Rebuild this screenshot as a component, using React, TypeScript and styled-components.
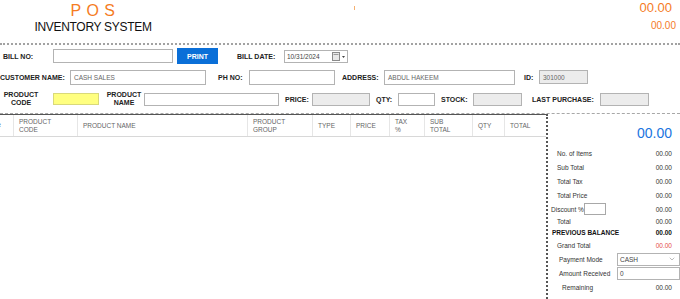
import React from "react";
import styled, { createGlobalStyle } from "styled-components";
import { ChevronDown } from "lucide-react";

const GlobalStyle = createGlobalStyle`
  body {
    margin: 0;
    font-family: "Liberation Sans", Arial, sans-serif;
    background: #fff;
    color: #222;
  }
`;

const columns = [
  { key: "no", title: "#", w: 14 },
  { key: "code", title: ["PRODUCT", "CODE"], w: 64 },
  { key: "name", title: "PRODUCT NAME", w: 170 },
  { key: "group", title: ["PRODUCT", "GROUP"], w: 65 },
  { key: "type", title: "TYPE", w: 38 },
  { key: "price", title: "PRICE", w: 39 },
  { key: "tax", title: ["TAX", "%"], w: 35 },
  { key: "sub", title: ["SUB", "TOTAL"], w: 48 },
  { key: "qty", title: "QTY", w: 32 },
  { key: "total", title: "TOTAL", w: 41 },
];

export default function App() {
  return (
    <Page>
      <GlobalStyle />
      <Header>
        <Brand>
          <BrandTop>P O S</BrandTop>
          <BrandSub>INVENTORY SYSTEM</BrandSub>
        </Brand>
        <Tick />
        <HeaderTotals>
          <BigOrange>00.00</BigOrange>
          <SmallOrange>00.00</SmallOrange>
        </HeaderTotals>
      </Header>

      <Form>
        <FormRow $h={18}>
          <Label $w={50} $ml={3}>BILL NO:</Label>
          <Input $w={120} $h={14} />
          <PrintButton>PRINT</PrintButton>
          <Label $w={47} $ml={19}>BILL DATE:</Label>
          <DateBox>
            <span>10/31/2024</span>
            <CalendarIcon width="14" height="9" viewBox="0 0 14 9">
              <rect x="0.5" y="0.5" width="7" height="8" fill="#e8e8e8" stroke="#8a8a8a" />
              <rect x="1.5" y="2" width="5" height="1" fill="#9a9a9a" />
              <path d="M10 4 L13 4 L11.5 6 Z" fill="#444" />
            </CalendarIcon>
          </DateBox>
        </FormRow>

        <FormRow $h={18}>
          <Label $w={70}>CUSTOMER NAME:</Label>
          <Input $w={136} $h={15}>CASH SALES</Input>
          <Label $w={31} $ml={12}>PH NO:</Label>
          <Input $w={86} $h={15} />
          <Label $w={42} $ml={7}>ADDRESS:</Label>
          <Input $w={131} $h={15}>ABDUL HAKEEM</Input>
          <Label $w={15} $ml={9}>ID:</Label>
          <Input $w={49} $h={14} $muted>301000</Input>
        </FormRow>

        <FormRow $h={20}>
          <StackLabel $w={42}>
            PRODUCT
            <br />
            CODE
          </StackLabel>
          <Input $w={46} $h={12} $ml={11} $yellow />
          <StackLabel $w={40} $ml={5}>
            PRODUCT
            <br />
            NAME
          </StackLabel>
          <Input $w={135} $h={13} />
          <Label $w={27} $ml={6}>PRICE:</Label>
          <Input $w={58} $h={13} $muted />
          <Label $w={22} $ml={6}>QTY:</Label>
          <Input $w={37} $h={13} />
          <Label $w={32} $ml={6}>STOCK:</Label>
          <Input $w={49} $h={13} $muted />
          <Label $w={68} $ml={10}>LAST PURCHASE:</Label>
          <Input $w={49} $h={13} $muted />
        </FormRow>
      </Form>

      <Main>
        <TableArea>
          <TableHead>
            {columns.map((c) => (
              <HeadCell key={c.key} $w={c.w} $first={c.key === "no"}>
                {Array.isArray(c.title) ? (
                  <>
                    {c.title[0]}
                    <br />
                    {c.title[1]}
                  </>
                ) : (
                  c.title
                )}
              </HeadCell>
            ))}
          </TableHead>
        </TableArea>

        <Summary>
          <BigBlue>00.00</BigBlue>
          <SumRow $h={14} $indent={9}>
            <span>No. of Items</span>
            <Value>00.00</Value>
          </SumRow>
          <SumRow $h={14} $indent={9}>
            <span>Sub Total</span>
            <Value>00.00</Value>
          </SumRow>
          <SumRow $h={14} $indent={9}>
            <span>Total Tax</span>
            <Value>00.00</Value>
          </SumRow>
          <SumRow $h={14} $indent={9}>
            <span>Total Price</span>
            <Value>00.00</Value>
          </SumRow>
          <SumRow $h={14} $indent={3}>
            <DiscountWrap>
              <span>Discount %</span>
              <SmallInput />
            </DiscountWrap>
            <Value>00.00</Value>
          </SumRow>
          <SumRow $h={10} $indent={9}>
            <span>Total</span>
            <Value>00.00</Value>
          </SumRow>
          <SumRow $h={13} $indent={4} $bold>
            <span>PREVIOUS BALANCE</span>
            <Value>00.00</Value>
          </SumRow>
          <SumRow $h={13} $indent={9}>
            <span>Grand Total</span>
            <Value $red>00.00</Value>
          </SumRow>
          <SumRow $h={14} $indent={11} $flush>
            <span>Payment Mode</span>
            <Control>
              <span>CASH</span>
              <ChevronDown size={8} color="#777" strokeWidth={1.5} />
            </Control>
          </SumRow>
          <SumRow $h={14} $indent={11} $flush>
            <span>Amount Received</span>
            <Control>
              <span>0</span>
            </Control>
          </SumRow>
          <SumRow $h={15} $indent={14}>
            <span>Remaining</span>
            <Value>00.00</Value>
          </SumRow>
        </Summary>
      </Main>
    </Page>
  );
}

const Page = styled.div`
  width: 680px;
  height: 299px;
  overflow: hidden;
  display: flex;
  flex-direction: column;
`;

const Header = styled.div`
  height: 43px;
  display: flex;
  align-items: flex-start;
  border-bottom: 2px dotted #a2a2a2;
`;

const Brand = styled.div`
  width: 186px;
  text-align: center;
  padding-top: 2px;
`;

const BrandTop = styled.div`
  color: #f57c1f;
  font-size: 16px;
  line-height: 18px;
  letter-spacing: 0.5px;
`;

const BrandSub = styled.div`
  font-size: 12px;
  line-height: 15px;
  letter-spacing: -0.3px;
  color: #111;
`;

const Tick = styled.span`
  width: 1px;
  height: 4px;
  margin: 6px 0 0 168px;
  background: #f5b070;
`;

const HeaderTotals = styled.div`
  margin-left: auto;
  display: flex;
  flex-direction: column;
  align-items: flex-end;
`;

const BigOrange = styled.div`
  color: #f57c1f;
  font-size: 13px;
  line-height: 15px;
  margin-right: 8px;
`;

const SmallOrange = styled.div`
  color: #f57c1f;
  font-size: 10px;
  line-height: 12px;
  margin-top: 5px;
  margin-right: 4px;
`;

const Form = styled.div`
  padding: 2px 0 4px;
  display: flex;
  flex-direction: column;
  gap: 2px;
  border-bottom: 1px dashed #a8a8a8;
`;

const FormRow = styled.div<{ $h: number }>`
  height: ${(p) => p.$h}px;
  display: flex;
  align-items: center;
  & + & {
    margin-top: 1px;
  }
`;

const Label = styled.span<{ $w: number; $ml?: number }>`
  width: ${(p) => p.$w}px;
  margin-left: ${(p) => p.$ml ?? 0}px;
  flex-shrink: 0;
  font-size: 7px;
  font-weight: bold;
  color: #222;
  white-space: nowrap;
`;

const StackLabel = styled(Label)`
  text-align: center;
  line-height: 8px;
`;

const Input = styled.div<{
  $w: number;
  $h: number;
  $ml?: number;
  $muted?: boolean;
  $yellow?: boolean;
}>`
  box-sizing: border-box;
  width: ${(p) => p.$w}px;
  height: ${(p) => p.$h}px;
  margin-left: ${(p) => p.$ml ?? 0}px;
  flex-shrink: 0;
  border: 1px solid ${(p) => (p.$yellow ? "#d9d97a" : "#b3b3b3")};
  background: ${(p) =>
    p.$yellow ? "#ffff80" : p.$muted ? "#ececec" : "#fff"};
  font-size: 6.5px;
  color: #666;
  padding-left: 3px;
  display: flex;
  align-items: center;
`;

const PrintButton = styled.div`
  width: 41px;
  height: 16px;
  margin-left: 4px;
  background: #0a6fd8;
  color: #fff;
  font-size: 7px;
  font-weight: bold;
  display: flex;
  align-items: center;
  justify-content: center;
`;

const DateBox = styled.div`
  box-sizing: border-box;
  width: 64px;
  height: 13px;
  border: 1px solid #b3b3b3;
  font-size: 6.5px;
  color: #444;
  display: flex;
  align-items: center;
  justify-content: space-between;
  padding: 0 1px 0 2px;
`;

const CalendarIcon = styled.svg`
  display: block;
`;

const Main = styled.div`
  flex: 1;
  display: flex;
`;

const TableArea = styled.div`
  width: 546px;
  border-top: 1px solid #555;
  border-right: 2px dotted #555;
`;

const TableHead = styled.div`
  display: flex;
  height: 21px;
  border-bottom: 1px solid #d8d8d8;
`;

const HeadCell = styled.div<{ $w: number; $first?: boolean }>`
  box-sizing: border-box;
  width: ${(p) => p.$w}px;
  padding-left: ${(p) => (p.$first ? 0 : 5)}px;
  text-indent: ${(p) => (p.$first ? -3 : 0)}px;
  overflow: hidden;
  border-right: 1px solid #e6e6e6;
  display: flex;
  align-items: center;
  font-size: 6.5px;
  line-height: 7.5px;
  color: ${(p) => (p.$first ? "#2c4c90" : "#666")};
  &:last-child {
    border-right: none;
  }
`;

const Summary = styled.div`
  flex: 1;
  display: flex;
  flex-direction: column;
  font-size: 6.5px;
  color: #333;
`;

const BigBlue = styled.div`
  height: 32px;
  box-sizing: border-box;
  padding: 10px 8px 0 0;
  text-align: right;
  color: #1a75e0;
  font-size: 14px;
  line-height: 18px;
`;

const SumRow = styled.div<{
  $h: number;
  $indent: number;
  $bold?: boolean;
  $flush?: boolean;
}>`
  height: ${(p) => p.$h}px;
  display: flex;
  align-items: center;
  justify-content: space-between;
  padding-left: ${(p) => p.$indent}px;
  padding-right: ${(p) => (p.$flush ? 0 : 8)}px;
  font-weight: ${(p) => (p.$bold ? "bold" : "normal")};
  color: ${(p) => (p.$bold ? "#111" : "#333")};
  white-space: nowrap;
`;

const Value = styled.span<{ $red?: boolean }>`
  color: ${(p) => (p.$red ? "#e5484d" : "inherit")};
`;

const DiscountWrap = styled.div`
  display: flex;
  align-items: center;
`;

const SmallInput = styled.div`
  box-sizing: border-box;
  width: 22px;
  height: 12px;
  border: 1px solid #a8a8a8;
  background: #fff;
`;

const Control = styled.div`
  box-sizing: border-box;
  width: 63px;
  height: 13px;
  border: 1px solid #b3b3b3;
  background: #fff;
  display: flex;
  align-items: center;
  justify-content: space-between;
  padding: 0 3px 0 2px;
  color: #444;
`;
